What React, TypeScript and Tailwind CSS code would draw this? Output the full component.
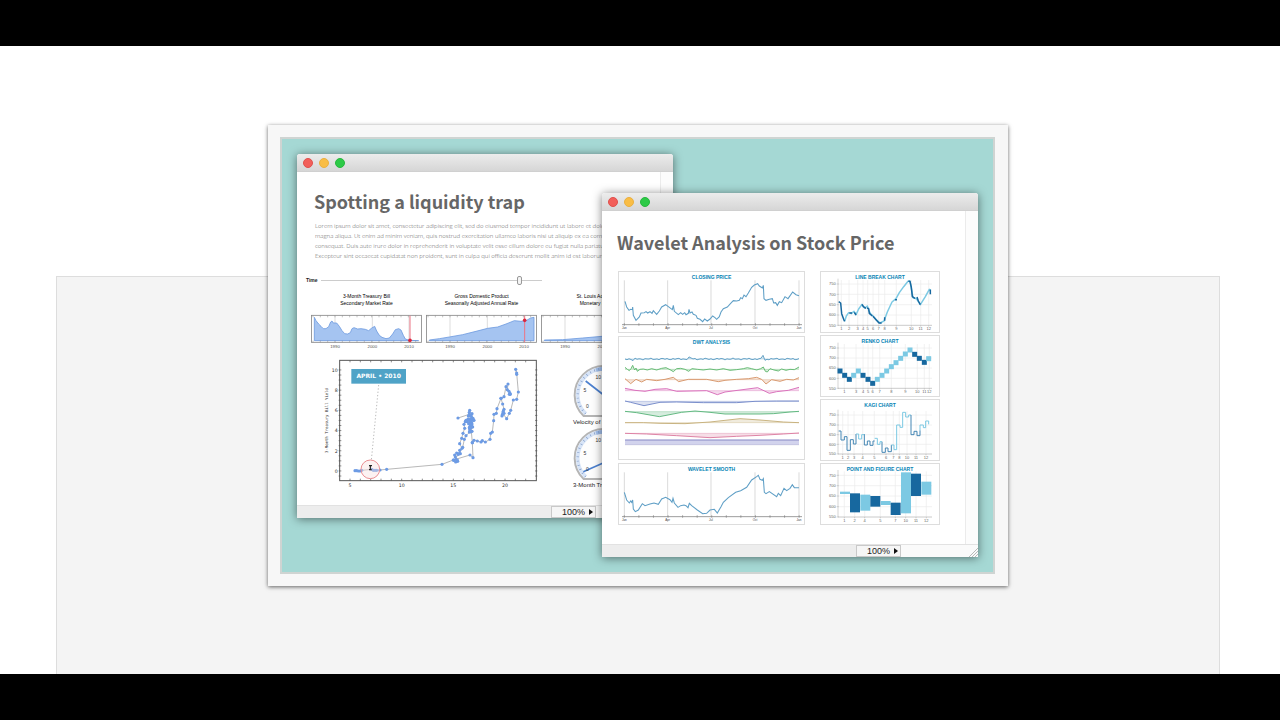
import type { ReactNode } from 'react'

type Point = [number, number]

const toPath = (points: Point[]) => points.map(([x, y]) => `${x},${y}`).join(' ')

const headingFont = "font-['Noto_Sans_CJK_SC','Noto_Sans',sans-serif]"

const closingPrice =
  '45,118 50,135 57,145 62,142 67,143 68,135 70,160 78,175 88,165 93,153 103,152 108,149 113,153 120,149 126,154 130,146 140,157 148,147 155,135 167,128 175,134 187,143 190,130 193,148 205,158 212,152 218,157 224,152 228,158 235,154 237,142 240,153 246,150 250,157 258,160 262,169 270,172 278,179 284,171 292,177 300,171 308,162 315,167 320,172 328,164 333,150 340,140 352,135 362,124 370,116 380,117 388,115 392,107 397,110 402,99 408,104 415,93 425,76 433,69 443,65 448,72 457,78 460,70 462,110 468,115 478,112 487,110 491,123 497,122 502,130 508,119 515,122 525,104 534,110 548,90 558,98 567,101'

const waveletSmooth =
  '43,292 50,315 58,324 62,318 65,322 68,315 70,342 76,350 85,345 97,326 105,332 120,327 132,324 145,328 155,312 167,307 180,314 186,322 189,310 193,324 204,337 212,332 222,330 228,332 234,338 238,325 245,332 262,345 278,356 290,355 300,345 313,343 322,354 333,335 340,322 355,308 377,292 392,287 410,277 425,255 440,245 445,241 450,253 457,256 460,251 463,292 468,296 478,290 500,305 505,295 512,302 522,280 530,287 540,280 547,269 553,278 567,278'

const ripple = (base: number, size: number, step: number, spikes: Record<number, number>): Point[] => {
  const points: Point[] = []
  for (let i = 0; 45 + i * step <= 567; i++) {
    const wobble = Math.sin(i * 2.3) * size + Math.sin(i * 0.9) * size * 0.6
    points.push([45 + i * step, base + wobble + (spikes[i] ?? 0)])
  }
  return points
}

const dwtSeries: { base: number; color: string; points: string }[] = [
  { base: 291, color: '#5f9ec4', points: toPath(ripple(291, 1.8, 6, { 4: 5, 32: -4, 33: -3, 69: -12, 70: 5 })) },
  { base: 322, color: '#62b870', points: '45,316 52,322 58,326 63,320 68,310 74,324 78,318 82,328 90,322 100,321 112,324 125,320 140,324 155,319 168,317 180,323 190,329 200,320 212,319 225,322 236,328 246,320 262,322 280,324 300,321 320,324 340,320 360,325 380,323 400,320 412,317 425,320 440,324 452,320 460,315 466,328 472,330 480,320 492,324 505,327 515,321 528,325 540,322 553,323 567,315' },
  { base: 353, color: '#d69468', points: '45,350 62,365 78,352 95,360 110,352 140,356 165,352 190,346 206,359 235,352 290,352 325,359 345,355 380,352 415,350 440,346 455,352 468,366 485,353 510,358 530,352 550,354 567,347' },
  { base: 386, color: '#d76cb8', points: '45,379 75,385 105,388 135,382 170,380 200,388 290,386 322,398 345,390 390,384 443,377 478,394 500,389 535,385 567,376' },
  { base: 418, color: '#7288c8', points: '45,417 62,421 102,431 150,421 200,420 280,422 380,422 435,418 500,417 567,417' },
  { base: 449, color: '#5bb57c', points: '45,448 80,452 148,464 215,451 255,447 300,451 345,456 450,456 490,455 540,450 567,448' },
  { base: 482, color: '#c5ae78', points: '45,482 100,482 150,484 225,485 300,480 390,470 450,474 520,480 567,482' },
  { base: 514, color: '#db7c9f', points: '45,514 110,516 200,521 300,527 380,523 450,520 520,516 567,513' },
]

function TitleBar() {
  return (
    <header className="flex h-[18px] items-center gap-1.5 rounded-t-[3px] border-b border-[#d0d0d0] bg-linear-to-b from-[#ececec] to-[#d6d6d6] px-1.5">
      <button aria-label="Close" className="size-2.5 rounded-full border border-[#e0504c] bg-[#f25f5a]" />
      <button aria-label="Minimize" className="size-2.5 rounded-full border border-[#eab040] bg-[#f9bd45]" />
      <button aria-label="Zoom" className="size-2.5 rounded-full border border-[#27b83e] bg-[#2dca47]" />
    </header>
  )
}

function StatusBar({ grip }: { grip?: boolean }) {
  return (
    <footer className="flex h-[13px] border-t border-[#e2e2e2] bg-[#ededed]">
      <div className="w-[254px]" />
      <button className="flex w-[45px] items-center justify-center gap-1 border border-[#c9c9c9] bg-[#f6f6f6] pl-2 font-['Liberation_Sans',sans-serif] text-[9px] leading-none text-[#222]">
        100%
        <svg viewBox="0 0 4 6" className="h-1.5 w-1">
          <path d="M0 0 4 3 0 6Z" fill="#111" />
        </svg>
      </button>
      <div className="flex flex-1 items-end justify-end bg-[#fafafa]">
        {grip && (
          <svg viewBox="0 0 10 10" className="size-2.5" stroke="#b8b8b8" strokeWidth="1">
            <path d="M1 10 10 1M4 10 10 4M7 10 10 7" />
          </svg>
        )}
      </div>
    </footer>
  )
}

function AppWindow({ title, grip, className, children }: { title: string; grip?: boolean; className: string; children: ReactNode }) {
  return (
    <section
      className={`absolute flex h-[364px] w-[376px] flex-col rounded-t-[3px] bg-white shadow-[0_1px_10px_rgba(0,0,0,0.5)] ${className}`}
    >
      <TitleBar />
      <div className="flex min-h-0 flex-1">
        <div className="min-w-0 flex-1 overflow-hidden">
          <h2 className={`whitespace-nowrap text-[18px] leading-6 font-bold text-[#666] ${headingFont} ${grip ? 'px-[15px] pt-[19px]' : 'px-[17px] pt-[17px]'}`}>
            {title}
          </h2>
          {children}
        </div>
        <div className="w-[13px] border-l border-[#ebebeb] bg-[#fcfcfc]" />
      </div>
      <StatusBar grip={grip} />
    </section>
  )
}

const trendCharts = [
  {
    title: ['3-Month Treasury Bill', 'Secondary Market Rate'],
    area: '55,227 55,157 60,167 68,177 75,184 82,191 90,191 98,185 104,171 108,168 112,174 122,174 130,184 138,197 146,206 155,207 163,203 168,191 174,188 185,192 195,191 208,193 218,197 226,190 236,184 242,198 250,211 258,217 270,221 280,219 290,207 298,194 308,191 315,195 322,211 328,222 340,226 368,227',
    marker: [342, 226],
    left: 45,
  },
  {
    title: ['Gross Domestic Product', 'Seasonally Adjusted Annual Rate'],
    area: '400,227 400,225 430,221 460,216 500,209 540,199 575,190 605,186 630,177 655,167 675,169 690,167 704,159 714,157 714,227',
    marker: [686, 166],
    left: 390,
  },
  {
    title: ['St. Louis Adjusted', 'Monetary Base'],
    area: '745,227 745,225 800,224 860,219 918,214 990,205 1050,170 1060,158 1060,227',
    marker: [1031, 186],
    left: 735,
  },
]

function TrendChart({ title, area, marker, left }: (typeof trendCharts)[number]) {
  const ticks = Array.from({ length: 15 }, (_, i) => left + 6 + i * 22)
  return (
    <figure className="w-[111px] shrink-0">
      <figcaption className="text-center font-['Liberation_Sans',sans-serif] text-[5px] leading-[7px] text-black">
        {title[0]}
        <br />
        {title[1]}
      </figcaption>
      <svg viewBox={`${left} 147 333 108`} className="mt-[7px] h-9 w-[111px]">
        <path d={`M${left + 72} 152V232M${left + 184} 152V232M${left + 294} 152V232`} stroke="#ccc" strokeWidth="2" />
        <polygon points={area} fill="#a5c4f1" stroke="#6f9be0" strokeWidth="2.5" />
        <path d={ticks.map((x) => `M${x} 151v6M${x} 232v-5`).join('')} stroke="#888" strokeWidth="1.5" />
        <rect x={left + 1.5} y="151" width="330" height="81" fill="none" stroke="#888" strokeWidth="2.5" />
        <path d={`M${marker[0]} 152V232`} stroke="#ec7484" strokeWidth="3" />
        <circle cx={marker[0]} cy={marker[1]} r="5.5" fill="#d9283f" />
        <g fontSize="13" fill="#555" textAnchor="middle" fontFamily="Liberation Sans, sans-serif">
          <text x={left + 72} y="249">1990</text>
          <text x={left + 184} y="249">2000</text>
          <text x={left + 294} y="249">2010</text>
        </g>
      </svg>
    </figure>
  )
}

const scatterPaths = [
  '135,359 145,360 155,358 185,355 195,358 210,357 230,355 396,340 430,327 437,333 443,331 436,318 445,310 440,306 451,308 449,298 456,292 449,278 455,262 459,247 464,232 462,220 468,208 480,206 475,195 479,178 481,195 486,188 484,208 480,226 484,241 487,275 492,268 502,270 513,273 517,269 526,273 540,265 542,247 547,243 551,209 552,190 559,187 561,173 573,142 582,137 588,107 594,99 592,116 600,127 597,121 601,130',
  '444,201 478,190 484,196 490,208 466,212 474,204 485,215 478,230 488,228 480,243 468,254 463,265 458,289 447,308 432,328',
  '430,327 480,312 489,320 487,275',
  '573,142 578,159 582,175 576,195 580,180 579,188 590,203 598,187 602,178 610,147 620,145 625,123 620,66 617,55 620,70',
]

const clusterDots: Point[] = [
  [140, 359], [150, 360], [190, 358], [200, 358], [438, 325], [442, 327], [434, 312], [478, 184], [472, 212], [478, 208],
  [484, 203], [492, 208], [481, 213], [489, 202], [476, 218], [486, 226], [479, 236], [483, 230], [486, 241], [579, 183],
  [577, 191], [582, 187], [598, 130], [486, 219], [482, 221], [478, 243],
]

function dotsOf(path: string) {
  return path.split(' ').map((pair) => pair.split(',').map(Number))
}

function YieldScatter() {
  const horizontal = Array.from({ length: 19 }, (_, i) => 120 + i * 31 - 31).filter((x) => x > 92 && x < 676)
  const vertical = Array.from({ length: 22 }, (_, i) => 375 - i * 15.15).filter((y) => y > 32)
  return (
    <svg viewBox="30 15 660 408" className="h-[136px] w-[220px]" role="img" aria-label="Treasury bill yield against velocity">
      <rect x="89" y="28" width="590" height="361" fill="none" stroke="#555" strokeWidth="3" />
      <path
        d={horizontal.map((x) => `M${x} 389v-6M${x} 28v6`).join('') + vertical.map((y) => `M86 ${y}h8M682 ${y}h-7`).join('')}
        stroke="#555"
        strokeWidth="2"
      />
      <path d="M206 102 184 328" stroke="#999" strokeWidth="2" strokeDasharray="4 6" />
      {scatterPaths.map((points) => (
        <polyline key={points} points={points} fill="none" stroke="#aaa" strokeWidth="2.5" />
      ))}
      {[...scatterPaths.flatMap((points) => dotsOf(points)), ...clusterDots].map(([x, y], i) => (
        <circle key={i} cx={x} cy={y} r="4.8" fill="#6d9be4" />
      ))}
      <circle cx="181" cy="355" r="28" fill="#f8dede" fillOpacity="0.4" stroke="#ea8f93" strokeWidth="3" />
      <path d="M177 344h9M181 344v12M177 356h8" stroke="#222" strokeWidth="3.5" fill="none" />
      <rect x="124" y="54" width="164" height="44" fill="#4fa3c7" />
      <text x="206" y="82" fontSize="18" fontWeight="700" fill="#fff" textAnchor="middle" fontFamily="DejaVu Sans, sans-serif">
        APRIL • 2010
      </text>
      <g fontSize="14" fill="#333" fontFamily="DejaVu Sans, sans-serif">
        <g textAnchor="middle">
          <text x="120" y="407">5</text>
          <text x="275" y="407">10</text>
          <text x="430" y="407">15</text>
          <text x="585" y="407">20</text>
        </g>
        <g textAnchor="end">
          <text x="83" y="365">0</text>
          <text x="83" y="305">2</text>
          <text x="83" y="244">4</text>
          <text x="83" y="184">6</text>
          <text x="83" y="124">8</text>
          <text x="83" y="63">10</text>
        </g>
        <text transform="translate(55 306) rotate(-90)" fontFamily="DejaVu Sans Mono, monospace" fontSize="12">
          3-Month Treasury Bill Yield
        </text>
      </g>
    </svg>
  )
}

function Gauge({ label, needle }: { label: string; needle: string }) {
  return (
    <figure className="w-16">
      <svg viewBox="93 44 192 159" className="h-[53px] w-16">
        <path d="M125 200A87 87 0 1 1 245 200Z" fill="#fdfdfd" stroke="#b5b5b5" strokeWidth="6" />
        <path d="M131 193A78 78 0 1 1 239 193" fill="none" stroke="#d7e4f7" strokeWidth="11" />
        <path d="M162 62A78 78 0 0 1 208 62" fill="none" stroke="#a3c1ee" strokeWidth="11" />
        <path d="M131 193A78 78 0 1 1 239 193" fill="none" stroke="#7c97c4" strokeWidth="7" strokeDasharray="2 11" />
        <path d={needle} stroke="#4c80cf" strokeWidth="5" />
        <g fontSize="15" fill="#333" fontFamily="Liberation Sans, sans-serif" textAnchor="middle">
          <text x="136" y="177">0</text>
          <text x="129" y="129">5</text>
          <text x="169" y="89">10</text>
          <text x="205" y="89">15</text>
        </g>
      </svg>
      <figcaption className="flex h-2.5 items-center whitespace-nowrap font-['Liberation_Sans',sans-serif] text-[6px] leading-none text-[#222]">
        {label}
      </figcaption>
    </figure>
  )
}

function ChartPanel({ title, className, viewBox, children }: { title: string; className: string; viewBox: string; children: ReactNode }) {
  return (
    <figure className={`flex flex-col border border-[#ddd] bg-white ${className}`}>
      <figcaption className="flex h-2.5 items-center justify-center whitespace-nowrap font-['Liberation_Sans',sans-serif] text-[5px] leading-none font-bold text-[#0784b5]">
        {title}
      </figcaption>
      <svg viewBox={viewBox} className="min-h-0 w-full flex-1 overflow-visible" fontFamily="Liberation Sans, sans-serif">
        {children}
      </svg>
    </figure>
  )
}

function PriceGrid({ top, axis }: { top: number; axis: number }) {
  const columns = [43, 173, 303, 435, 567]
  const months = ['Jan', 'Apr', 'Jul', 'Oct', 'Jan']
  return (
    <>
      <path d={columns.map((x) => `M${x} ${top}V${axis}`).join('')} stroke="#d2d2d2" strokeWidth="2.5" />
      <path
        d={`M36 ${axis}H576` + Array.from({ length: 13 }, (_, i) => `M${43 + i * 43.7} ${axis - 4}v7`).join('')}
        stroke="#888"
        strokeWidth="2.5"
      />
      {months.map((month, i) => (
        <text key={i} x={columns[i]} y={axis + 12} fontSize="9" fill="#444" textAnchor="middle">
          {month}
        </text>
      ))}
    </>
  )
}

function SmallGrid({ rows, axis, ticks }: { rows: number[]; axis: number; ticks: [number, string][] }) {
  const labels = ['750', '700', '650', '600', '550']
  return (
    <>
      <path
        d={rows.map((y) => `M78 ${y}H360`).join('') + ticks.map(([x]) => `M${x} ${rows[0] - 12}V${axis}`).join('')}
        stroke="#ececec"
        strokeWidth="2"
      />
      <path
        d={`M78 ${rows[0] - 16}V${axis}H360` + rows.map((y) => `M74 ${y}h6`).join('') + ticks.map(([x]) => `M${x} ${axis}v4`).join('')}
        stroke="#aaa"
        strokeWidth="1.5"
        fill="none"
      />
      <g fontSize="12" fill="#666">
        {rows.map((y, i) => (
          <text key={y} x="71" y={y + 4} textAnchor="end">
            {labels[i]}
          </text>
        ))}
        {ticks.map(([x, label]) => (
          <text key={label} x={x} y={axis + 14} textAnchor="middle">
            {label}
          </text>
        ))}
      </g>
    </>
  )
}

const NAVY = '#17689f'
const SKY = '#7cc9e3'

const renkoBricks: [number, number, string][] = [
  [84, 327, NAVY], [98, 340, NAVY], [112, 352, NAVY], [125, 340, SKY], [139, 327, SKY], [153, 340, NAVY], [168, 352, NAVY],
  [182, 364, NAVY], [196, 352, SKY], [210, 340, SKY], [224, 327, SKY], [238, 314, SKY], [252, 302, SKY], [266, 289, SKY],
  [280, 276, SKY], [294, 264, SKY], [308, 277, NAVY], [322, 289, NAVY], [337, 301, NAVY], [350, 290, SKY],
]

const figureBlocks: [number, number, number, string][] = [
  [84, 290, 297, SKY], [114, 295, 352, NAVY], [145, 299, 347, SKY], [175, 303, 335, NAVY], [206, 318, 330, SKY],
  [236, 323, 360, NAVY], [267, 232, 355, SKY], [297, 236, 303, NAVY], [328, 260, 299, SKY],
]

function LiquidityWindow() {
  return (
    <AppWindow title="Spotting a liquidity trap" className="top-[15px] left-[15px]">
      <p className="mt-2 whitespace-nowrap pl-[18px] font-['Open_Sans',sans-serif] text-[6px] leading-[10px] font-light text-[#666]">
        Lorem ipsum dolor sit amet, consectetur adipiscing elit, sed do eiusmod tempor incididunt ut labore et dolore
        <br />
        magna aliqua. Ut enim ad minim veniam, quis nostrud exercitation ullamco laboris nisi ut aliquip ex ea commodo
        <br />
        consequat. Duis aute irure dolor in reprehenderit in voluptate velit esse cillum dolore eu fugiat nulla pariatur.
        <br />
        Excepteur sint occaecat cupidatat non proident, sunt in culpa qui officia deserunt mollit anim id est laborum.
      </p>
      <div className="mt-3.5 flex h-2.5 items-center gap-[3px] pl-[9px]">
        <label htmlFor="time" className="font-['Liberation_Sans',sans-serif] text-[5px] leading-none font-bold text-[#222]">
          Time
        </label>
        <input
          id="time"
          type="range"
          defaultValue={91}
          className="h-2.5 w-[221px] appearance-none bg-transparent [&::-webkit-slider-runnable-track]:h-px [&::-webkit-slider-runnable-track]:bg-[#ccc] [&::-webkit-slider-thumb]:-mt-1 [&::-webkit-slider-thumb]:h-[9px] [&::-webkit-slider-thumb]:w-[5px] [&::-webkit-slider-thumb]:appearance-none [&::-webkit-slider-thumb]:rounded-[2px] [&::-webkit-slider-thumb]:border [&::-webkit-slider-thumb]:border-[#999] [&::-webkit-slider-thumb]:bg-[#f4f4f4]"
        />
      </div>
      <div className="mt-2 flex gap-1 pl-3.5">
        {trendCharts.map((chart) => (
          <TrendChart key={chart.left} {...chart} />
        ))}
      </div>
      <div className="mt-1.5 flex gap-[33px] pl-[23px]">
        <YieldScatter />
        <div className="mt-2">
          <Gauge label="Velocity of Money" needle="M131 95 185 137" />
          <Gauge label="3-Month Treasury" needle="M124 178 185 151" />
        </div>
      </div>
    </AppWindow>
  )
}

function WaveletWindow() {
  return (
    <AppWindow title="Wavelet Analysis on Stock Price" grip className="top-[54px] left-[320px]">
      <div className="mt-[17px] flex gap-[15px] pl-4">
        <div className="flex w-[187px] flex-col gap-[3px]">
          <ChartPanel title="CLOSING PRICE" className="h-[62px]" viewBox="27 60 555 150">
            <PriceGrid top={55} axis={188} />
            <polyline points={closingPrice} fill="none" stroke="#5f9fc6" strokeWidth="3.2" />
          </ChartPanel>
          <ChartPanel title="DWT ANALYSIS" className="h-[124px]" viewBox="27 255 555 336">
            {dwtSeries.map(({ base, color, points }) => (
              <g key={base} stroke={color}>
                <polygon points={`45,${base} ${points} 567,${base}`} fill={color} fillOpacity="0.25" stroke="none" />
                <path d={`M45 ${base}H567`} strokeWidth="2" strokeOpacity="0.5" />
                <polyline points={points} fill="none" strokeWidth="2.8" />
              </g>
            ))}
            <rect x="45" y="534" width="522" height="14" fill="#d2d3ed" />
            <path d="M45 534H567" stroke="#8587c4" strokeWidth="3" />
            <path d="M45 548H567" stroke="#b3b3d8" strokeWidth="2" />
          </ChartPanel>
          <ChartPanel title="WAVELET SMOOTH" className="h-[62px]" viewBox="27 237 555 150">
            <PriceGrid top={232} axis={365} />
            <polyline points={waveletSmooth} fill="none" stroke="#5f9fc6" strokeWidth="3.2" />
          </ChartPanel>
        </div>
        <div className="flex w-[120px] flex-col gap-0.5">
          <ChartPanel title="LINE BREAK CHART" className="h-[62px]" viewBox="27 60 354 150">
            <SmallGrid
              rows={[66, 97, 128, 159, 190]}
              axis={190}
              ticks={[[88, '1'], [111, '2'], [137, '3'], [153, '4'], [167, '5'], [183, '6'], [200, '7'], [218, '8'], [253, '9'], [298, '10'], [326, '11'], [350, '12']]}
            />
            <g fill="none" strokeWidth="4.5" strokeLinejoin="round">
              <polyline stroke={SKY} points="98,178 103,162 110,152 118,155 126,148 132,158 140,141 150,127 158,138 166,132 170,145 176,155 183,162 192,172 204,183 216,177 226,150 240,120 252,110 262,92 275,74 288,58 294,58 303,107 313,110 325,128 340,104 352,82 357,84" />
              <g stroke={NAVY}>
                <polyline points="80,119 86,123 89,155 95,172 98,178" />
                <path d="M112 153h8M127 151l5 8M150 127l4 7 8 5M165 138l5 2 2 14 9 8M183 163l9 10 9 10 8 0M218 166v10M249 113h6M289 58h5l4 18 3 28 8 5M315 105l4 12 6 11M355 83v14" />
              </g>
            </g>
          </ChartPanel>
          <ChartPanel title="RENKO CHART" className="h-[62px]" viewBox="27 252 354 150">
            <SmallGrid
              rows={[258, 288, 318, 349, 379]}
              axis={379}
              ticks={[[97, '1'], [132, '3'], [153, '4'], [168, '5'], [182, '6'], [203, '7'], [238, '8'], [280, '9'], [316, '10'], [337, '11'], [352, '12']]}
            />
            {renkoBricks.map(([x, y, color]) => (
              <rect key={x} x={x - 7.5} y={y - 7.5} width="15" height="15" fill={color} />
            ))}
          </ChartPanel>
          <ChartPanel title="KAGI CHART" className="h-[62px]" viewBox="27 45 354 150">
            <SmallGrid
              rows={[60, 90, 119, 148, 177]}
              axis={177}
              ticks={[[92, '1'], [108, '2'], [126, '3'], [152, '4'], [187, '5'], [222, '6'], [244, '7'], [262, '8'], [285, '10'], [312, '11'], [342, '12']]}
            />
            <g fill="none" strokeWidth="3">
              <path stroke="#4586b4" d="M80 108H87V135H97V125H105V166H115V134H124V147H132V117M157 117V150H166V138H174V151H183V138H188M210 140V172H220V159H228V170H238V150" />
              <path stroke={SKY} d="M132 117H140V132H149V119H157M188 130H196V148H204V140H210M238 150H246V164H254V90H264V97H272V52H281V66H290V60H297" />
              <path stroke="#4586b4" d="M297 60V119H306V109H315V122H324V106" />
              <path stroke={SKY} d="M324 106V90H334V98H341V78H350V88" />
            </g>
          </ChartPanel>
          <ChartPanel title="POINT AND FIGURE CHART" className="h-[62px]" viewBox="27 237 354 150">
            <SmallGrid
              rows={[241, 272, 303, 335, 366]}
              axis={366}
              ticks={[[97, '1'], [128, '2'], [158, '4'], [205, '5'], [250, '7'], [281, '10'], [312, '11'], [343, '12']]}
            />
            {figureBlocks.map(([x, top, bottom, color]) => (
              <rect key={x} x={x} y={top} width="30" height={bottom - top} fill={color} />
            ))}
          </ChartPanel>
        </div>
      </div>
    </AppWindow>
  )
}

export default function App() {
  return (
    <div className="flex min-h-screen flex-col bg-white">
      <div className="h-[46px] bg-black" />
      <main className="mr-15 ml-14 grid flex-1">
        <div className="col-start-1 row-start-1 mt-[230px] border border-b-0 border-[#ddd] bg-[#f4f4f4]" />
        <div className="col-start-1 row-start-1 mt-[79px] mb-[88px] w-[740px] max-w-full self-start justify-self-center bg-[#f7f7f7] p-3 pr-[13px] shadow-[0_1px_4px_rgba(0,0,0,0.6)]">
          <div className="relative h-[437px] overflow-hidden border-2 border-[#cfd4d2] bg-[#a5d8d4]">
            <LiquidityWindow />
            <WaveletWindow />
          </div>
        </div>
      </main>
      <div className="h-[46px] bg-black" />
    </div>
  )
}
